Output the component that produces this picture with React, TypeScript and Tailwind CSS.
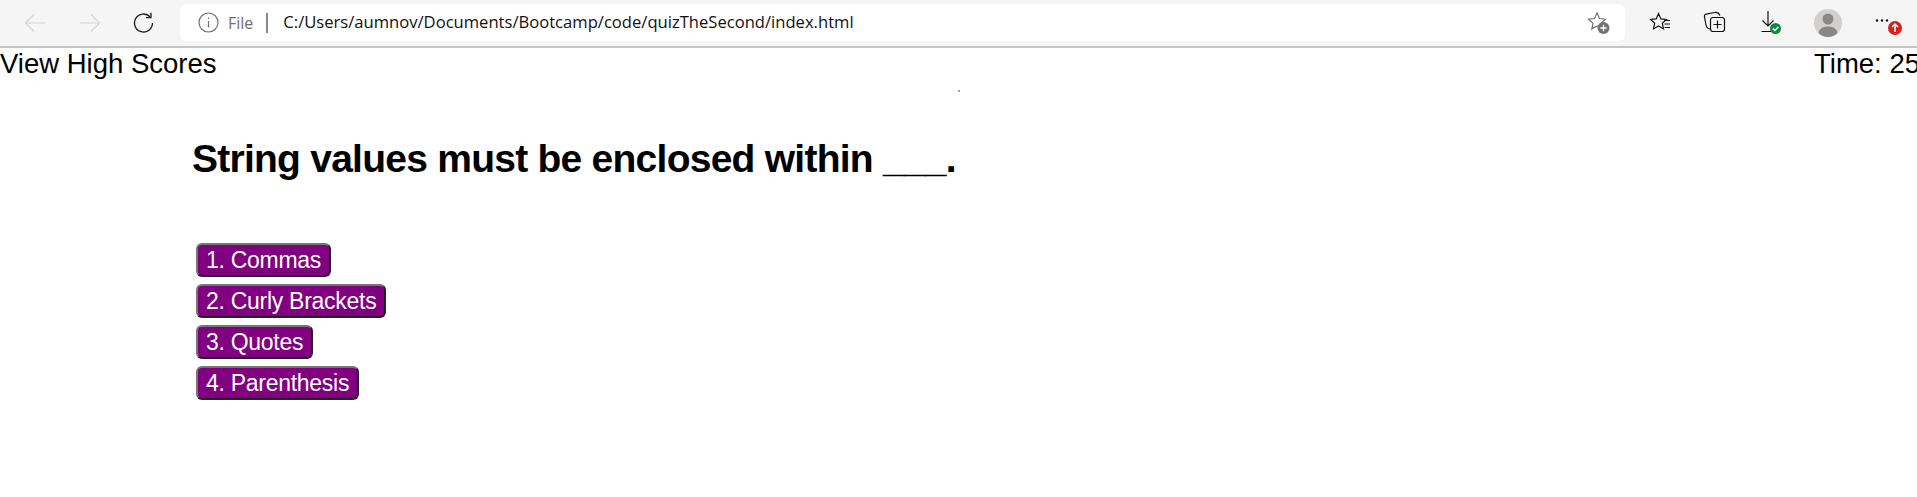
const answers = ['1. Commas', '2. Curly Brackets', '3. Quotes', '4. Parenthesis'];

function BackIcon({ className }: { className: string }) {
  return (
    <svg width="22" height="20" viewBox="0 0 22 20" fill="none" stroke="currentColor" strokeWidth="1.2" className={className}>
      <path d="M1.5 10H21M10 1.5 1.5 10l8.5 8.5" />
    </svg>
  );
}

function ToolbarIcons() {
  return (
    <div className="flex items-center">
      <svg width="24" height="24" viewBox="0 0 24 24" fill="none" className="ml-[23px] text-[#111]" stroke="currentColor" strokeWidth="1.2">
        <path d="M10.5 2.5l2.4 5.4 5.6.6-4.2 3.8 1.2 5.6-5-2.9-5 2.9 1.2-5.6L2.6 8.500l5.600-.6z" />
        <path d="M16 9.500h6M16.500 13h5.500M16.500 16.500h5.500" />
      </svg>
      <svg width="24" height="24" viewBox="0 0 24 24" fill="none" className="ml-[31px] text-[#111]" stroke="currentColor" strokeWidth="1.2">
        <path d="M8 18C5 18 3.500 17 3 14L1.500 6C1.200 4 2 3 4 2.800L12 1.500C14.500 1.200 16 2 16.800 4.500" />
        <rect x="7.500" y="6.500" width="14" height="14" rx="2.500" />
        <path d="M14.500 9.500v8M10.500 13.500h8" />
      </svg>
      <svg width="24" height="26" viewBox="0 0 24 26" fill="none" className="ml-[33px] text-[#111]">
        <path d="M8 1v15M2.500 10.500 8 16l5.500-5.500M1.500 21.500H12" stroke="currentColor" strokeWidth="1.2" />
        <circle cx="15.500" cy="18.500" r="5.500" fill="#10893e" />
        <path d="M12.800 18.500l2 2 3.500-3.500" stroke="#fff" strokeWidth="1.400" />
      </svg>
      <svg width="28" height="28" viewBox="0 0 28 28" className="ml-[30px]">
        <circle cx="14" cy="14" r="14" fill="#d2d0ce" />
        <circle cx="14" cy="10" r="5.500" fill="#8a8886" />
        <path d="M4.500 24C5.500 19.500 9 17.500 14 17.500S22.500 19.500 23.500 24C21 26.500 17.500 28 14 28S7 26.500 4.500 24Z" fill="#8a8886" />
      </svg>
      <svg width="28" height="26" viewBox="0 0 28 26" className="ml-[33px]">
        <circle cx="2" cy="10.500" r="1.200" fill="#111" />
        <circle cx="7" cy="10.500" r="1.200" fill="#111" />
        <circle cx="12" cy="10.500" r="1.200" fill="#111" />
        <circle cx="20" cy="18" r="7" fill="#d92121" />
        <path d="M20 22v-7.500M17 17l3-3 3 3" stroke="#fff" strokeWidth="1.500" fill="none" />
      </svg>
    </div>
  );
}

export default function App() {
  return (
    <div className="h-[497px] overflow-hidden bg-white font-['Liberation_Sans',Arial,sans-serif] text-black">
      <div className="flex h-[48px] items-start border-b-2 border-[#c4c4c4] bg-[#f5f5f5] font-['Open_Sans',sans-serif]">
        <div className="flex h-[46px] w-[180px] shrink-0 items-center pl-[24px]">
          <BackIcon className="text-[#d4d4d4]" />
          <BackIcon className="ml-[33px] rotate-180 text-[#d4d4d4]" />
          <svg width="22" height="22" viewBox="0 0 22 22" fill="none" stroke="#1a1a1a" strokeWidth="1.300" className="ml-[32px]">
            <path d="M19.500 11A9 9 0 1 1 17 4.800" />
            <path d="M18 .8V5.600H13" />
          </svg>
        </div>
        <div className="mt-[4px] flex h-[37px] w-[1445px] shrink-0 items-center rounded-[6px] bg-white pl-[18px] pr-[14px]">
          <svg width="21" height="21" viewBox="0 0 21 21" fill="none" stroke="#737373" strokeWidth="1.200">
            <circle cx="10.500" cy="10.500" r="9.500" />
            <path d="M10.500 9v6.500M10.500 5.500v1.500" />
          </svg>
          <span className="ml-[9px] text-[16px] text-[#6e6e6e]">File</span>
          <span className="ml-[13px] h-[20px] w-[2px] bg-[#8a8a8a]" />
          <span className="ml-[15px] text-[16.600px] text-[#111]">C:/Users/aumnov/Documents/Bootcamp/code/quizTheSecond/index.html</span>
          <svg width="24" height="24" viewBox="0 0 24 24" fill="none" className="ml-auto">
            <path d="M10 2l2.500 5.500 6 .7-4.500 4 1.200 5.800-5.200-3-5.200 3 1.200-5.800-4.500-4 6-.7z" stroke="#737373" strokeWidth="1.200" />
            <circle cx="16.500" cy="17" r="6" fill="#737373" />
            <path d="M16.500 13.800v6.400M13.300 17h6.400" stroke="#fff" strokeWidth="1.300" />
          </svg>
        </div>
        <div className="flex h-[46px] items-center">
          <ToolbarIcons />
        </div>
      </div>
      <div className="flex justify-between text-[27.500px] leading-[32px]">
        <span>View High Scores</span>
        <span className="mr-[-3px]">Time: 25</span>
      </div>
      <div className="mx-auto mt-[10px] h-[2px] w-[2px] bg-[#a0a0a0]" />
      <main className="pl-[192px]">
        <h1 className="mt-[44px] text-[39px] font-bold leading-[46px] tracking-[-0.75px]">String values must be enclosed within ___.</h1>
        <ul className="mt-[61px] flex flex-col items-start gap-[7px] pl-[4px]">
          {answers.map((answer) => (
            <li key={answer}>
              <button className="block h-[34px] rounded-[6px] border-2 border-b-[#222] border-l-[#767676] border-r-[#222] border-t-[#767676] bg-[#800080] px-[8px] text-[23px] leading-[28px] tracking-[-0.28px] text-white">
                {answer}
              </button>
            </li>
          ))}
        </ul>
      </main>
    </div>
  );
}
